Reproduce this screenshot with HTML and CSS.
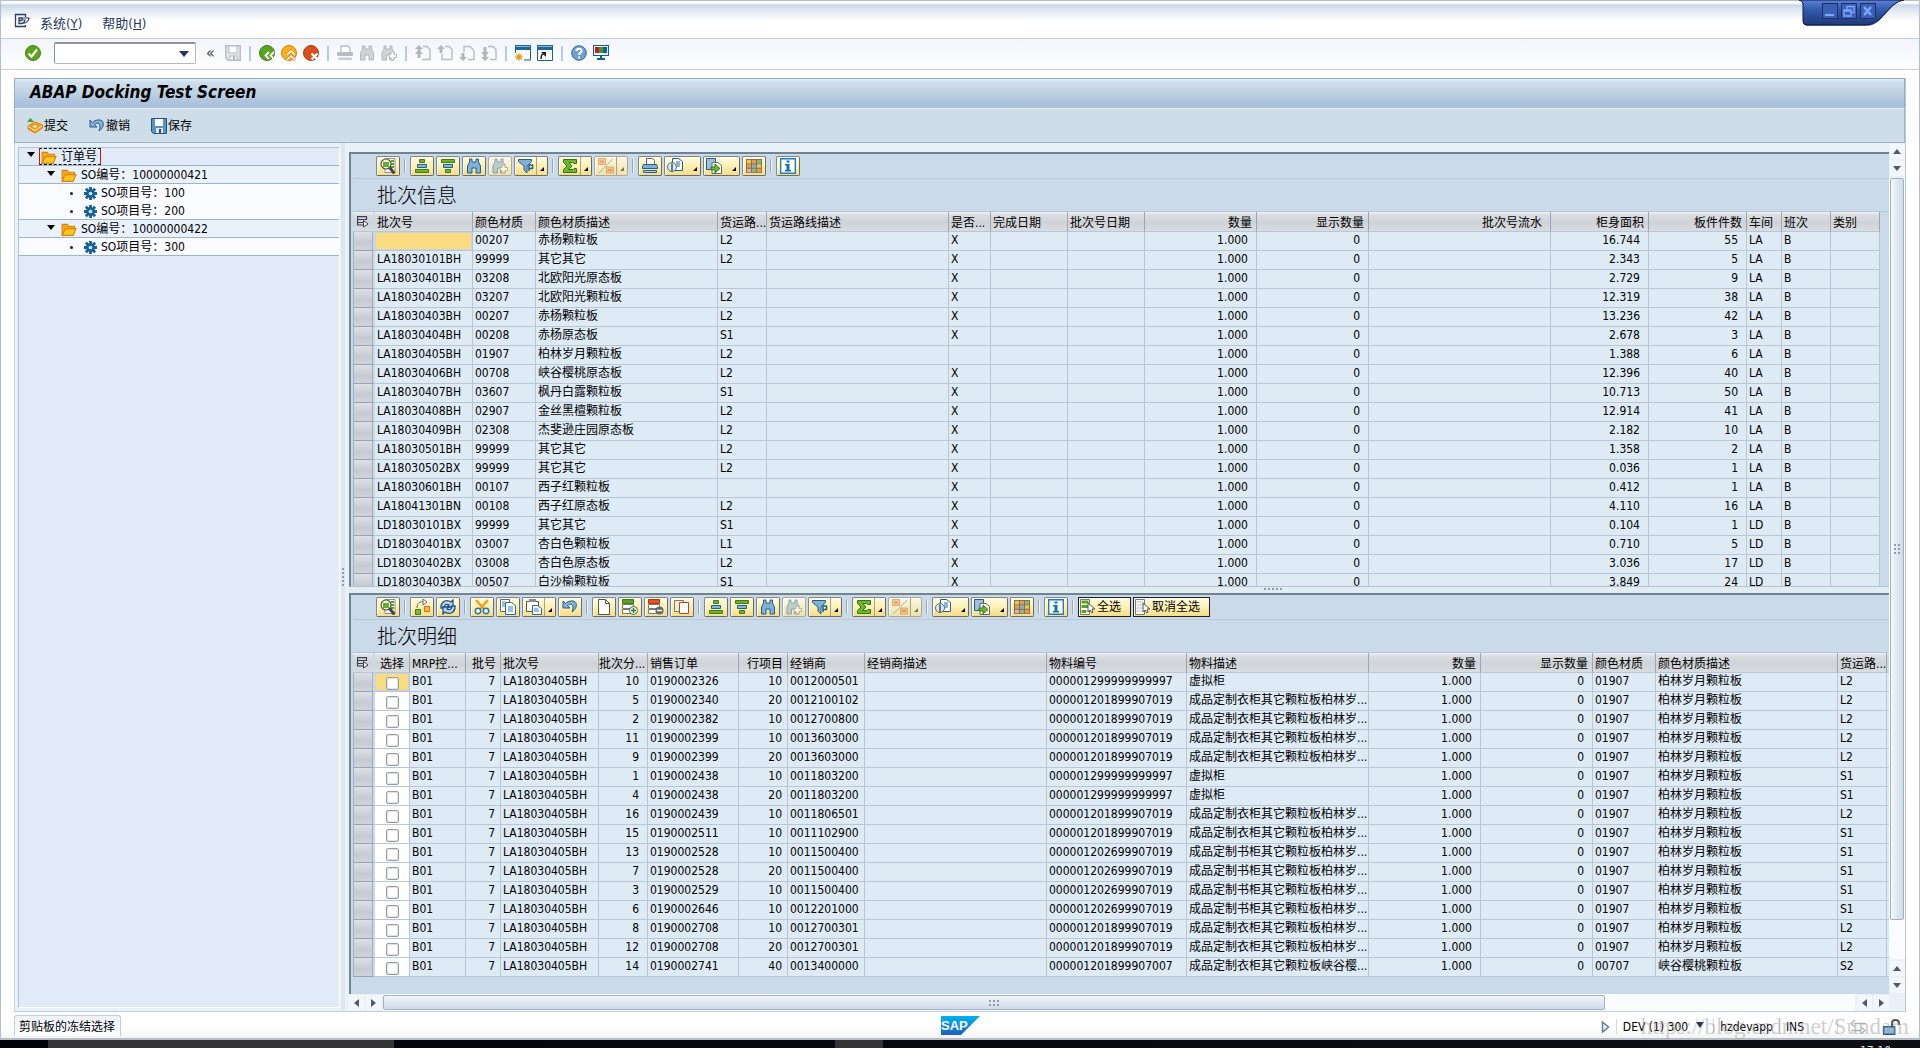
FILE: index.html
```html
<!DOCTYPE html>
<html lang="zh-CN">
<head>
    <meta charset="UTF-8">
    <meta name="viewport" content="width=device-width, initial-scale=1.0">
    <title>ABAP Docking Test Screen</title>
    <link rel="stylesheet" href="styles.css">
</head>
<body>
    <!-- icon sprite -->
    <svg class="sprite" aria-hidden="true">
        <defs>
            <linearGradient id="g-sap" x1="0" y1="0" x2="0" y2="1">
                <stop offset="0" stop-color="#00b4ee"/><stop offset="1" stop-color="#1c5fbf"/>
            </linearGradient>
            <linearGradient id="g-win" x1="0" y1="0" x2="0" y2="1">
                <stop offset="0" stop-color="#5b82d6"/><stop offset="0.4" stop-color="#3458ac"/><stop offset="1" stop-color="#1f3a7c"/>
            </linearGradient>
        </defs>
        <symbol id="i-menu" viewBox="0 0 16 16"><path d="M11.500 4V1.500h-10v12h10V12M8 5H5v5.500h3M5 7.500h3" fill="none" stroke="#2b3c66" stroke-width="1.300"/><path d="M8 5h7c0 3-3 5.500-7 5.500 2-1 3-2 3-3.500H8z" fill="#fff" stroke="#2b3c66" stroke-width="1.200"/></symbol>
        <symbol id="i-ok" viewBox="0 0 16 16"><circle cx="8" cy="8" r="7.500" fill="#5aa514" stroke="#4b7d2a"/><path d="M3.500 8.500l3 3 5.500-7" fill="none" stroke="#fff" stroke-width="2.200"/></symbol>
        <symbol id="i-save-off" viewBox="0 0 16 16"><path d="M.7.7h14.600v14.600H3L.7 13z" fill="#dfe1e3" stroke="#b9bcc1" stroke-width="1.400"/><path d="M4 1h8v7H4z" fill="#fff" stroke="#b9bcc1"/><path d="M5 11h7v4H5z" fill="#fff" stroke="#b9bcc1"/><path d="M8 11h2v4H8z" fill="#b0b4b9"/></symbol>
        <symbol id="i-back" viewBox="0 0 16 16"><circle cx="8" cy="8" r="7.500" fill="#57a51c" stroke="#3d7a28"/><path d="M10 7L6.500 10.500 10 14M15 7l-3.500 3.500L15 14" fill="none" stroke="#fff" stroke-width="1.800"/></symbol>
        <symbol id="i-exit" viewBox="0 0 16 16"><circle cx="8" cy="8" r="7.500" fill="#f9b115" stroke="#e07a10"/><path d="M6 10l4-4 4 4M6 15l4-4 4 4" fill="none" stroke="#e07a10" stroke-width="3"/><path d="M6 10l4-4 4 4M6 15l4-4 4 4" fill="none" stroke="#fff" stroke-width="1.700"/></symbol>
        <symbol id="i-cancel" viewBox="0 0 16 16"><circle cx="8" cy="8" r="7.500" fill="#d9501a" stroke="#b23c10"/><path d="M8.500 8.500l6 6M14.500 8.500l-6 6" stroke="#fff" stroke-width="2.400"/></symbol>
        <symbol id="i-print-off" viewBox="0 0 16 16"><path d="M4 7V1h7l2 2v4" fill="#fff" stroke="#b9bcc1" stroke-width="1.300"/><rect x="0" y="7" width="16" height="4" rx="1" fill="#b9bcc1"/><rect x="1" y="12.500" width="14" height="2.500" rx="1" fill="#c9ccd0"/></symbol>
        <symbol id="i-find-off" viewBox="0 0 16 16"><path d="M3.500 1h2.500v3h4V1h2.500v3l2 4v7H10v-5H6v5H1.500V8l2-4z" fill="#d0d3d6" stroke="#b3b6bb"/></symbol>
        <symbol id="i-next-off" viewBox="0 0 16 16"><path d="M3 1h2v3h4V1h2v3l2 3v8H8.500v-5h-3v5H1V8l2-4z" fill="#d0d3d6" stroke="#b3b6bb"/><path d="M10 7h3v2.500h2.500v3H13V15h-3v-2.500H8v-3h2z" fill="#fff" stroke="#b3b6bb"/></symbol>
        <symbol id="i-first" viewBox="0 0 16 16"><path d="M8 1.500h4l3 3v10H7" fill="none" stroke="#b9bcc1" stroke-width="1.400"/><path d="M4 0l4 4H5.500v2L8 9H5.500v4h-3V9H0l2.500-3V4H0z" fill="#b3b6bb"/></symbol>
        <symbol id="i-prev" viewBox="0 0 16 16"><path d="M8 1.500h4l3 3v10H5V9" fill="none" stroke="#b9bcc1" stroke-width="1.400"/><path d="M4 0l4 4H5.500v4h-3V4H0z" fill="#b3b6bb"/></symbol>
        <symbol id="i-nextp" viewBox="0 0 16 16"><path d="M5 7V1.500h6l4 4v9H9" fill="none" stroke="#b9bcc1" stroke-width="1.400"/><path d="M4 16l4-4H5.500V8h-3v4H0z" fill="#b3b6bb"/></symbol>
        <symbol id="i-last" viewBox="0 0 16 16"><path d="M7 1.500h5l3 3v10H9" fill="none" stroke="#b9bcc1" stroke-width="1.400"/><path d="M4 16l4-4H5.500v-2L8 7H5.500V2h-3v5H0l2.500 3v2H0z" fill="#b3b6bb"/></symbol>
        <symbol id="i-newwin" viewBox="0 0 16 16"><path d="M.5 8V1h15v14H9" fill="#fff" stroke="#14618f"/><path d="M0 0h16v5H0z" fill="#1a699b"/><path d="M1 1h14v1H1z" fill="#8db9d6"/><circle cx="4" cy="12" r="2.500" fill="#fbb614"/><path d="M4 8v8M0 12h8M1 9l6 6M7 9l-6 6" stroke="#f0960e"/></symbol>
        <symbol id="i-shortcut" viewBox="0 0 16 16"><path d="M.5.5h15v15H.5z" fill="#fff" stroke="#14618f"/><path d="M0 0h16v5H0z" fill="#1a699b"/><path d="M1 1h14v1H1z" fill="#8db9d6"/><path d="M4 14c0-4 1-5 4-6" fill="none" stroke="#222" stroke-width="1.500"/><path d="M4 7h5v5z" fill="#222"/></symbol>
        <symbol id="i-help" viewBox="0 0 16 16"><circle cx="8" cy="8" r="7.300" fill="#6fa0cf" stroke="#2f6ca5"/><path d="M5.500 6c0-3 5-3 5 0 0 2-2.500 1.800-2.500 4M8 11.500v2" fill="none" stroke="#fff" stroke-width="2"/></symbol>
        <symbol id="i-layout" viewBox="0 0 16 16"><path d="M0 0h16v11H0z" fill="#105f95"/><path d="M1 1h14v9H1z" fill="#e8f2fa"/><path d="M2 2h4v6H2z" fill="#d01818"/><path d="M6 2h4v6H6z" fill="#38a01c"/><path d="M10 2h4v6h-4z" fill="#1657a8"/><path d="M7 11h2v2h3v2H4v-2h3z" fill="#105f95"/></symbol>
        <symbol id="i-submit" viewBox="0 0 16 16"><path d="M1 8l7-4 7.500 3v3L8 15l-7-4z" fill="#f6a71c" stroke="#d9780c"/><path d="M4 8.500l4-2 4 1.500-4 2.500z" fill="#fff3d0" stroke="#e08a14"/><path d="M1 8.500l7 4 7-5" fill="none" stroke="#fbe0a0"/><path d="M3.500 0L7 4H0z" fill="#4f9a28"/></symbol>
        <symbol id="i-undo" viewBox="0 0 16 16"><path d="M1 2v7h7L5.500 6.500C9 3.500 13 6 10 13c6-4 6-12-1-11-2 0-4 1-5.500 2.500z" fill="#82b1d8" stroke="#1f5f94"/></symbol>
        <symbol id="i-save" viewBox="0 0 16 16"><path d="M.5.5h15v15H2.500l-2-2z" fill="#5b93bf" stroke="#14588a"/><path d="M4 1h8v7H4z" fill="#fff"/><path d="M5 10h7v5H5z" fill="#dbe8f2"/><path d="M8 11h2v4H8z" fill="#14588a"/></symbol>
        <symbol id="i-folder" viewBox="0 0 16 14"><path d="M.6 13V1.500H6l1.500 2H14V6" fill="#f4a81a" stroke="#d9820e" stroke-width="1.200"/><path d="M.6 13.300L4 6h11.500l-3 7.300z" fill="#fbc81e" stroke="#d9820e" stroke-width="1.200"/></symbol>
        <symbol id="i-gear" viewBox="0 0 14 14"><path d="M7 0v14M0 7h14M2 2l10 10M12 2L2 12" stroke="#12609a" stroke-width="3"/><circle cx="7" cy="7" r="4.600" fill="#12609a"/><circle cx="7" cy="7" r="2" fill="#cfe3f2"/></symbol>
        <symbol id="i-detail" viewBox="0 0 16 16"><path d="M5 .5h10v14H5z" fill="#fff" stroke="#8a8f94"/><path d="M11 2h3v2h-3zM11 5h3v2h-3zM11 8h3v2h-3z" fill="#5aa514"/><circle cx="6" cy="6" r="5" fill="#eef6e4" stroke="#555" stroke-width="1.200"/><path d="M3 4h6v5H3z" fill="#67ac2a"/><path d="M9.500 9.500l5 6" stroke="#444" stroke-width="3"/></symbol>
        <symbol id="i-asc" viewBox="0 0 16 16"><path d="M5.500 1.500h5v3h-5z" fill="#6cb52c" stroke="#3c7c1c"/><path d="M3.500 6.500h9v3h-9z" fill="#8ab6d8" stroke="#1e5f8f"/><path d="M1.500 11.500h13v3h-13z" fill="#6cb52c" stroke="#3c7c1c"/></symbol>
        <symbol id="i-desc" viewBox="0 0 16 16"><path d="M1.500 1.500h13v3h-13z" fill="#6cb52c" stroke="#3c7c1c"/><path d="M3.500 6.500h9v3h-9z" fill="#8ab6d8" stroke="#1e5f8f"/><path d="M5.500 11.500h5v3h-5z" fill="#6cb52c" stroke="#3c7c1c"/></symbol>
        <symbol id="i-find" viewBox="0 0 16 16"><path d="M3.500 1h2.500v3h4V1h2.500v3l2 4v7H10v-5H6v5H1.500V8l2-4z" fill="#7fb0d8" stroke="#1e5f8f"/></symbol>
        <symbol id="i-findn" viewBox="0 0 16 16"><path d="M3 1h2v3h4V1h2v3l2 3v8H8.500v-5h-3v5H1V8l2-4z" fill="#7fb0d8" stroke="#1e5f8f"/><path d="M10 7h3v2.500h2.500v3H13V15h-3v-2.500H8v-3h2z" fill="#fff" stroke="#777"/></symbol>
        <symbol id="i-filter" viewBox="0 0 16 16"><path d="M.5 1.500h13v2L9 8v7l-3-3V8L.5 3.500z" fill="#82b1d8" stroke="#1e5f8f"/><path d="M11 13V7h3.500v3.500H11" fill="none" stroke="#1e5f8f" stroke-width="1.500"/></symbol>
        <symbol id="i-sum" viewBox="0 0 16 16"><path d="M1.500 1.500h13v4h-3l-1-1H7L10 8l-3.500 3.500H11l1-1h2.500v4h-13v-3L5 8 1.500 4.500z" fill="#6cb52c" stroke="#2c7a1c"/></symbol>
        <symbol id="i-sub" viewBox="0 0 16 16"><path d="M.5.5h7v6h-7zM8.500 9h7v6h-7z" fill="#f5a04c" stroke="#d0661c"/><path d="M2 2.500h4v2H2zM10 11h4v2h-4z" fill="#d0502c"/><path d="M15 1L1 15" stroke="#777"/></symbol>
        <symbol id="i-print" viewBox="0 0 16 16"><path d="M4.500 6V.5h6l2 2V6" fill="#fff" stroke="#666"/><path d="M1.500 6.500h13l1 2v2H.5v-2z" fill="#7fb0d8" stroke="#1e5f8f"/><path d="M1.500 12.500h13v2h-13z" fill="#b9d4ea" stroke="#1e5f8f"/></symbol>
        <symbol id="i-view" viewBox="0 0 16 16"><path d="M5.500.5h6l4 3v9h-10z" fill="#fff" stroke="#1e5f8f"/><path d="M9 4h4M9 6h4M9 8h4" stroke="#1e6fa8"/><circle cx="5" cy="9" r="4.500" fill="#dce9f2" stroke="#666"/><path d="M5 5.500V13" stroke="#1e5f8f" stroke-width="1.500"/></symbol>
        <symbol id="i-export" viewBox="0 0 16 16"><path d="M.5.5h9v11h-9z" fill="#9cc0de" stroke="#1e5f8f"/><path d="M6 4.500h6l3.500 3v8H6z" fill="#fff" stroke="#666"/><path d="M5 9h4V6l5 4.500L9 15v-3H5z" fill="#6cb52c" stroke="#2c7a1c"/></symbol>
        <symbol id="i-grid" viewBox="0 0 16 16"><path d="M0 1h16v14H0z" fill="#77736a"/><path d="M1 2h4v3.500H1zM11 6.300h4v3.500h-4z" fill="#f8c832"/><path d="M6 2h4v3.500H6zM1 6.300h4v3.500H1zM11 10.800h4v3.500h-4z" fill="#f09a3e"/><path d="M11 2h4v3.500h-4zM6 10.800h4v3.500H6z" fill="#92b968"/><path d="M6 6.300h4v3.500H6z" fill="#86aed2"/><path d="M1 10.800h4v3.500H1z" fill="#f0a8a8"/></symbol>
        <symbol id="i-info" viewBox="0 0 16 16"><path d="M.7.7h14.600v14.600H.7z" fill="#fff" stroke="#1a7fc0" stroke-width="1.400"/><path d="M6.500 2.500h3v2h-3zM5 6h4.500v6H11v1.500H5V12h1.500V7.500H5z" fill="#1272b0"/></symbol>
        <symbol id="i-mass" viewBox="0 0 16 16"><path d="M1.500 10.500h5v5h-5z" fill="#7cbc3c" stroke="#3c7c1c"/><path d="M10.500 7.500h5v5h-5z" fill="#f9b846" stroke="#e06a10"/><path d="M3 9c0-5 3-7 7-6" fill="none" stroke="#666"/><path d="M9 0l4 3-4 3z" fill="#fff" stroke="#666"/></symbol>
        <symbol id="i-refresh" viewBox="0 0 16 16"><path d="M1 9V7c1-5 6-7 10-4l2-2v7H7l2-2C6.500 4.500 4 6 4 9z" fill="#bcd4ec" stroke="#1c4f8c" stroke-width="1.300"/><path d="M15 7v2c-1 5-6 7-10 4l-2 2V8h6l-2 2c2.500 1.500 5 0 5-3z" fill="#bcd4ec" stroke="#1c4f8c" stroke-width="1.300"/></symbol>
        <symbol id="i-cut" viewBox="0 0 16 16"><path d="M2 1l8 9M14 1L6 10" stroke="#f0a01e" stroke-width="2.500"/><circle cx="4" cy="12" r="2.700" fill="#fff" stroke="#2b74ad" stroke-width="1.500"/><circle cx="12" cy="12" r="2.700" fill="#fff" stroke="#2b74ad" stroke-width="1.500"/></symbol>
        <symbol id="i-copy" viewBox="0 0 16 16"><path d="M.5.500h9v12h-9z" fill="#fff" stroke="#666"/><path d="M2 3h3M2 5h3M2 7h3" stroke="#3a82b8"/><path d="M5.500 3.500h6l4 3v9h-10z" fill="#fff" stroke="#1e6fa8"/><path d="M8 8h5M8 10h5M8 12h5" stroke="#3a82b8"/></symbol>
        <symbol id="i-paste" viewBox="0 0 16 16"><path d="M.5 2.500h12v10H.5z" fill="#fff" stroke="#555"/><path d="M3 0h7v3H3z" fill="#8a8a86"/><path d="M6.500 6.500h5l4 3v6h-9z" fill="#fff" stroke="#1e6fa8"/><path d="M8 10h4M8 12h5" stroke="#3a82b8"/></symbol>
        <symbol id="i-new" viewBox="0 0 16 16"><path d="M2.500.5h7l4 4v11h-11z" fill="#fff" stroke="#555"/><path d="M9.500.5v4h4" fill="none" stroke="#555"/></symbol>
        <symbol id="i-insrow" viewBox="0 0 16 16"><path d="M.5.500h11v4H.5z" fill="#55a516" stroke="#3c7c1c"/><path d="M.5 5.500h11v4H.5zM.5 10.500h11v4H.5z" fill="#fff" stroke="#777"/><circle cx="11.500" cy="11.500" r="4" fill="#fff" stroke="#2c7a3c"/><path d="M11.500 9v5M9 11.500h5" stroke="#2c7a3c" stroke-width="1.500"/></symbol>
        <symbol id="i-delrow" viewBox="0 0 16 16"><path d="M.5.500h11v4H.5z" fill="#e0531a" stroke="#b23c10"/><path d="M.5 5.500h11v4H.5zM.5 10.500h11v4H.5z" fill="#fff" stroke="#777"/><circle cx="11.500" cy="11.500" r="4" fill="#666"/><path d="M9 11.500h5" stroke="#fff" stroke-width="1.500"/></symbol>
        <symbol id="i-duprow" viewBox="0 0 16 16"><path d="M.5 1.500h9v11h-9z" fill="#f7efc8" stroke="#777"/><path d="M5.500 3.500h9v11h-9z" fill="#fff" stroke="#c8402c"/></symbol>
        <symbol id="i-selall" viewBox="0 0 16 16"><path d="M.5.500h9v15h-9z" fill="#fff" stroke="#777"/><path d="M1.500 1.500h7v3h-7zM1.500 6h7v3h-7zM1.500 11h5v3h-5z" fill="#55a516"/><path d="M8 4v9l2-2 2 3 1-1-1-3h3z" fill="#fff" stroke="#555"/></symbol>
        <symbol id="i-selnone" viewBox="0 0 16 16"><path d="M.5.500h9v15h-9z" fill="#fff" stroke="#777"/><path d="M1.500 3h7M1.500 6h7M1.500 9h7M1.500 12h5" stroke="#b8bcc0"/><path d="M8 4v9l2-2 2 3 1-1-1-3h3z" fill="#fff" stroke="#555"/></symbol>
        <symbol id="i-selcol" viewBox="0 0 12 12"><path d="M9.500 4V.7h-9V9H7M.5 3.500h9M.5 6.500H6" fill="none" stroke="#3b3f55" stroke-width="1.200"/><path d="M6.500 4.500v6.500l4.500-3z" fill="#fff" stroke="#3b3f55"/></symbol>
        <symbol id="i-lock" viewBox="0 0 18 16"><path d="M9 8V4c0-4 7-4 7 0v2" fill="none" stroke="#555" stroke-width="2"/><path d="M.7 7.700h11v7.500H.7z" fill="#8fbbdf" stroke="#1a5c8e" stroke-width="1.400"/></symbol>
        <symbol id="i-xfer" viewBox="0 0 16 14"><path d="M5 3.500h10M11 10.500H1M5 0L1 3.500 5 7M11 7l4 3.500L11 14" fill="none" stroke="#b3b6ba" stroke-width="1.500"/></symbol>
    </svg>

    <div class="window">
        <div class="menubar">
            <svg class="icon"><use href="#i-menu"/></svg>
            <button class="menu-item">系统(<u>Y</u>)</button>
            <button class="menu-item">帮助(<u>H</u>)</button>
        </div>

        <div class="window-controls">
            <svg class="controls-bg" viewBox="0 0 106 30"><path d="M0 0q4 1 4 5v16q0 5 5 5h58q8 0 14-6L93 7q7-7 13-7z" fill="#10204a" opacity="0.500"/><path d="M0 0q4 1 4 4v17q0 4 4 4h59q7 0 13-5L93 6q7-6 12-6z" fill="url(#g-win)" stroke="#0c1a40" stroke-width="1"/></svg>
            <button aria-label="最小化"><svg viewBox="0 0 14 14"><path d="M2 11h9" stroke="#7fa6ff" stroke-width="2"/></svg></button>
            <button aria-label="还原"><svg viewBox="0 0 14 14"><path d="M5 5V2.500h7v6H9.500M2 6h7v6H2zM2 7h7" fill="none" stroke="#7fa6ff" stroke-width="1.300"/></svg></button>
            <button aria-label="关闭"><svg viewBox="0 0 14 14"><path d="M3 3l7 8M10 3l-7 8" stroke="#7fa6ff" stroke-width="2.500"/></svg></button>
        </div>

        <div class="toolbar">
            <button class="tool"><svg class="icon"><use href="#i-ok"/></svg></button>
            <div class="command">
                <input type="text" aria-label="命令">
                <button class="command-arrow" aria-label="历史"></button>
            </div>
            <button class="collapse">«</button>
            <button class="tool"><svg class="icon"><use href="#i-save-off"/></svg></button>
            <span class="sep"></span>
            <button class="tool"><svg class="icon"><use href="#i-back"/></svg></button>
            <button class="tool"><svg class="icon"><use href="#i-exit"/></svg></button>
            <button class="tool"><svg class="icon"><use href="#i-cancel"/></svg></button>
            <span class="sep"></span>
            <button class="tool"><svg class="icon"><use href="#i-print-off"/></svg></button>
            <button class="tool"><svg class="icon"><use href="#i-find-off"/></svg></button>
            <button class="tool"><svg class="icon"><use href="#i-next-off"/></svg></button>
            <span class="sep"></span>
            <button class="tool"><svg class="icon"><use href="#i-first"/></svg></button>
            <button class="tool"><svg class="icon"><use href="#i-prev"/></svg></button>
            <button class="tool"><svg class="icon"><use href="#i-nextp"/></svg></button>
            <button class="tool"><svg class="icon"><use href="#i-last"/></svg></button>
            <span class="sep"></span>
            <button class="tool"><svg class="icon"><use href="#i-newwin"/></svg></button>
            <button class="tool"><svg class="icon"><use href="#i-shortcut"/></svg></button>
            <span class="sep"></span>
            <button class="tool"><svg class="icon"><use href="#i-help"/></svg></button>
            <button class="tool"><svg class="icon"><use href="#i-layout"/></svg></button>
        </div>

        <div class="frame">
            <h1 class="titlebar">ABAP Docking Test Screen</h1>
            <div class="app-toolbar">
                <button><svg class="icon"><use href="#i-submit"/></svg>提交</button>
                <button><svg class="icon"><use href="#i-undo"/></svg>撤销</button>
                <button><svg class="icon"><use href="#i-save"/></svg>保存</button>
            </div>

            <div class="content">
                <div class="tree-pane">
                    <ul class="tree">
                        <li class="node root"><span class="arrow"></span><span class="focus"><svg class="folder"><use href="#i-folder"/></svg>订单号</span></li>
                        <li class="node parent"><span class="arrow"></span><svg class="folder"><use href="#i-folder"/></svg>SO编号：10000000421</li>
                        <li class="node leaf"><span class="dot"></span><svg class="gear"><use href="#i-gear"/></svg>SO项目号：100</li>
                        <li class="node leaf last"><span class="dot"></span><svg class="gear"><use href="#i-gear"/></svg>SO项目号：200</li>
                        <li class="node parent"><span class="arrow"></span><svg class="folder"><use href="#i-folder"/></svg>SO编号：10000000422</li>
                        <li class="node leaf last"><span class="dot"></span><svg class="gear"><use href="#i-gear"/></svg>SO项目号：300</li>
                    </ul>
                </div>
                <div class="splitter"><span class="grip"></span></div>

                <div class="docking">
                    <div class="panel panel-top">
                        <div class="alv-toolbar" id="headToolbar"></div>
                        <h2 class="alv-title">批次信息</h2>
                        <table class="alv" id="headTable"></table>
                    </div>
                    <div class="h-splitter"><span class="grip"></span></div>
                    <div class="panel panel-bottom">
                        <div class="alv-toolbar" id="itemToolbar"></div>
                        <h2 class="alv-title">批次明细</h2>
                        <table class="alv" id="itemTable"></table>
                    </div>
                    <div class="hscroll">
                        <button class="sb left" aria-label="左"></button>
                        <button class="sb right" aria-label="右"></button>
                        <div class="htrack"><div class="hthumb"><span class="grip"></span></div></div>
                        <button class="sb left" aria-label="左"></button>
                        <button class="sb right" aria-label="右"></button>
                    </div>
                </div>

                <div class="vscroll">
                    <button class="sb up" aria-label="上"></button>
                    <button class="sb down" aria-label="下"></button>
                    <div class="vtrack"><div class="vthumb"><span class="grip"></span></div></div>
                    <button class="sb up" aria-label="上"></button>
                    <button class="sb down" aria-label="下"></button>
                </div>
            </div>
        </div>

        <div class="statusbar">
            <span class="message">剪贴板的冻结选择</span>
            <svg class="logo" viewBox="0 0 39 19"><path d="M0 0h39L20 19H0z" fill="url(#g-sap)"/><text x="0" y="14" class="logo-text">SAP</text></svg>
            <div class="session">
                <svg class="play" viewBox="0 0 8 12"><path d="M1 1l6 5-6 5z" fill="#eaf1f8" stroke="#5f7da3" stroke-width="1.500"/></svg>
                <span class="status-sep"></span>
                <span class="system">DEV (1) 300<i class="caret"></i></span>
                <span class="status-sep"></span>
                <span class="host">hzdevapp</span>
                <span class="status-sep"></span>
                <span class="mode">INS</span>
                <span class="status-sep"></span>
                <svg class="xfer"><use href="#i-xfer"/></svg>
                <svg class="lock"><use href="#i-lock"/></svg>
            </div>
            <span class="watermark">https://blog.csdn.net/Sundam</span>
        </div>
    </div>
    <div class="taskbar"><span class="task wide"></span><span class="task small"></span><span class="clock">17:10</span></div>

    <script>
        const headTools = ["detail", "|", "asc", "desc", "find", "findn off", "filter split", "|", "sum split", "sub split off",
            "|", "print", "view drop", "export drop", "grid", "|", "info"];
        const itemTools = ["detail", "|", "mass", "refresh", "|", "cut", "copy", "paste split", "undo", "|", "new", "insrow", "delrow", "duprow",
            "|", "asc", "desc", "find", "findn off", "filter split", "|", "sum split", "sub split off",
            "|", "view drop", "export drop", "grid", "|", "info", "|", "selall text 全选", "selnone text 取消全选"];

        // [title, width, alignment]
        const headCols = [["批次号", 98], ["颜色材质", 63], ["颜色材质描述", 182], ["货运路...", 49], ["货运路线描述", 182], ["是否...", 42],
            ["完成日期", 77], ["批次号日期", 77], ["数量", 112, "num"], ["显示数量", 112, "num"], ["批次号流水", 182, "num wide"],
            ["柜身面积", 98, "num"], ["板件件数", 98, "num"], ["车间", 35], ["班次", 49], ["类别", 49]];
        const itemCols = [["选择", 35, "check"], ["MRP控...", 56], ["批号", 35, "int"], ["批次号", 98], ["批次分...", 49, "num"], ["销售订单", 91],
            ["行项目", 49, "int"], ["经销商", 77], ["经销商描述", 182], ["物料编号", 140], ["物料描述", 182], ["数量", 112, "num"],
            ["显示数量", 112, "num"], ["颜色材质", 63], ["颜色材质描述", 182], ["货运路...", 49], ["", 49]];

        const batches = [
            ["", "00207", "赤杨颗粒板", "L2", "X", "16.744", 55, "LA"],
            ["LA18030101BH", "99999", "其它其它", "L2", "X", "2.343", 5, "LA"],
            ["LA18030401BH", "03208", "北欧阳光原态板", "", "X", "2.729", 9, "LA"],
            ["LA18030402BH", "03207", "北欧阳光颗粒板", "L2", "X", "12.319", 38, "LA"],
            ["LA18030403BH", "00207", "赤杨颗粒板", "L2", "X", "13.236", 42, "LA"],
            ["LA18030404BH", "00208", "赤杨原态板", "S1", "X", "2.678", 3, "LA"],
            ["LA18030405BH", "01907", "柏林岁月颗粒板", "L2", "", "1.388", 6, "LA"],
            ["LA18030406BH", "00708", "峡谷樱桃原态板", "L2", "X", "12.396", 40, "LA"],
            ["LA18030407BH", "03607", "枫丹白露颗粒板", "S1", "X", "10.713", 50, "LA"],
            ["LA18030408BH", "02907", "金丝黑檀颗粒板", "L2", "X", "12.914", 41, "LA"],
            ["LA18030409BH", "02308", "杰斐逊庄园原态板", "L2", "X", "2.182", 10, "LA"],
            ["LA18030501BH", "99999", "其它其它", "L2", "X", "1.358", 2, "LA"],
            ["LA18030502BX", "99999", "其它其它", "L2", "X", "0.036", 1, "LA"],
            ["LA18030601BH", "00107", "西子红颗粒板", "", "X", "0.412", 1, "LA"],
            ["LA18041301BN", "00108", "西子红原态板", "L2", "X", "4.110", 16, "LA"],
            ["LD18030101BX", "99999", "其它其它", "S1", "X", "0.104", 1, "LD"],
            ["LD18030401BX", "03007", "杏白色颗粒板", "L1", "X", "0.710", 5, "LD"],
            ["LD18030402BX", "03008", "杏白色原态板", "L2", "X", "3.036", 17, "LD"],
            ["LD18030403BX", "00507", "白沙榆颗粒板", "S1", "X", "3.849", 24, "LD"]
        ];

        const virtual = "虚拟柜";
        const wardrobe = "成品定制衣柜其它颗粒板柏林岁...";
        const bookcase = "成品定制书柜其它颗粒板柏林岁...";
        const items = [
            [10, "0190002326", 10, "0012000501", "000001299999999997", virtual, "L2"],
            [5, "0190002340", 20, "0012100102", "000001201899907019", wardrobe, "L2"],
            [2, "0190002382", 10, "0012700800", "000001201899907019", wardrobe, "L2"],
            [11, "0190002399", 10, "0013603000", "000001201899907019", wardrobe, "L2"],
            [9, "0190002399", 20, "0013603000", "000001201899907019", wardrobe, "L2"],
            [1, "0190002438", 10, "0011803200", "000001299999999997", virtual, "S1"],
            [4, "0190002438", 20, "0011803200", "000001299999999997", virtual, "S1"],
            [16, "0190002439", 10, "0011806501", "000001201899907019", wardrobe, "L2"],
            [15, "0190002511", 10, "0011102900", "000001201899907019", wardrobe, "S1"],
            [13, "0190002528", 10, "0011500400", "000001202699907019", bookcase, "S1"],
            [7, "0190002528", 20, "0011500400", "000001202699907019", bookcase, "S1"],
            [3, "0190002529", 10, "0011500400", "000001202699907019", bookcase, "S1"],
            [6, "0190002646", 10, "0012201000", "000001202699907019", bookcase, "S1"],
            [8, "0190002708", 10, "0012700301", "000001201899907019", wardrobe, "L2"],
            [12, "0190002708", 20, "0012700301", "000001201899907019", wardrobe, "L2"],
            [14, "0190002741", 40, "0013400000", "000001201899907007", "成品定制衣柜其它颗粒板峡谷樱...", "S2"]
        ];

        function buildToolbar(id, tools) {
            document.getElementById(id).innerHTML = tools.map(tool => {
                if (tool === "|") return '<span class="alv-sep"></span>';
                const [name, ...rest] = tool.split(" ");
                const isText = rest[0] === "text";
                const label = isText ? rest[1] : "";
                const cls = isText ? "text" : rest.join(" ");
                return `<button class="alv-btn ${cls}"><svg class="icon"><use href="#i-${name}"/></svg>${label}</button>`;
            }).join("");
        }

        function buildTable(id, cols, rows) {
            const width = cols.reduce((sum, col) => sum + col[1], 22);
            const table = document.getElementById(id);
            table.style.width = width + "px";
            let html = '<colgroup><col style="width:22px">' + cols.map(c => `<col style="width:${c[1]}px">`).join("") + "</colgroup>";
            html += '<thead><tr><th class="sel"><svg class="selcol"><use href="#i-selcol"/></svg></th>';
            html += cols.map(c => `<th class="${c[2] || ""}">${c[0]}</th>`).join("") + "</tr></thead><tbody>";
            rows.forEach((row, r) => {
                html += '<tr><td class="sel"></td>' + row.map((value, i) => {
                    const cls = (cols[i][2] || "") + (r === 0 && i === 0 ? " current" : "");
                    return `<td class="${cls}">${value}</td>`;
                }).join("") + "</tr>";
            });
            table.innerHTML = html + "</tbody>";
        }

        buildToolbar("headToolbar", headTools);
        buildToolbar("itemToolbar", itemTools);
        buildTable("headTable", headCols, batches.map(b =>
            [b[0], b[1], b[2], b[3], "", b[4], "", "", "1.000", 0, "", b[5], b[6], b[7], "B", ""]));
        buildTable("itemTable", itemCols, items.map((d, i) => {
            const cherry = i === items.length - 1;
            return [`<input type="checkbox" aria-label="选择 ${d[0]}">`, "B01", 7, "LA18030405BH", d[0], d[1], d[2], d[3], "", d[4], d[5],
                "1.000", 0, cherry ? "00707" : "01907", cherry ? "峡谷樱桃颗粒板" : "柏林岁月颗粒板", d[6], ""];
        }));
    </script>
</body>
</html>
```
FILE: styles.css
```css
* {
    box-sizing: border-box;
}
body {
    margin: 0;
    height: 100vh;
    display: flex;
    flex-direction: column;
    overflow: hidden;
    background: #05070b;
    color: #000;
    font-family: "DejaVu Sans Condensed", "Noto Sans CJK SC", sans-serif;
    font-size: 12px;
    line-height: 18px;
}
button {
    margin: 0;
    padding: 0;
    border: 0;
    background: none;
    color: inherit;
    font: inherit;
    white-space: nowrap;
}
.sprite {
    position: absolute;
    width: 0;
    height: 0;
}
.icon {
    width: 16px;
    height: 16px;
    flex: none;
    display: block;
}

/* window */
.window {
    position: relative;
    flex: 1;
    min-height: 0;
    display: flex;
    flex-direction: column;
    background: #fff;
    border: 1px solid #b3bfd0;
    border-bottom: 2px solid #b8bcc2;
}
.menubar {
    height: 38px;
    display: flex;
    align-items: center;
    padding: 8px 13px 0;
    border-bottom: 1px solid #c3ccd9;
    background: linear-gradient(#fff 0, #fff 2px, #cbd8e8 4px, #e4eaf2 10px, #fff 20px);
    color: #23345c;
    font-size: 13px;
}
.menubar .icon {
    margin-right: 10px;
    margin-bottom: 6px;
}
.menu-item {
    margin-right: 20px;
}
.window-controls {
    position: absolute;
    top: -1px;
    right: 14px;
    width: 106px;
    height: 30px;
    display: flex;
    gap: 3px;
    padding: 3px 0 0 23px;
}
.controls-bg {
    position: absolute;
    left: 0;
    top: 0;
    width: 106px;
    height: 30px;
}
.window-controls button {
    position: relative;
    width: 16px;
    height: 16px;
    border: 1px solid #1b2f66;
    background: #3c60b4;
}
.window-controls button svg {
    display: block;
    width: 14px;
    height: 14px;
}
.toolbar {
    height: 31px;
    display: flex;
    align-items: center;
    gap: 6px;
    padding: 0 24px 2px;
    border-bottom: 1px solid #c9cdd6;
    background: linear-gradient(#f1f4f9, #fff);
}
.command {
    display: flex;
    align-items: center;
    width: 142px;
    height: 22px;
    margin: 0 4px 0 7px;
    border: 1px solid #b5b9be;
    border-top: 2px solid #8f9398;
    border-left-color: #8f9398;
    border-radius: 2px;
    background: #fff;
}
.command input {
    flex: 1;
    min-width: 0;
    border: 0;
    padding: 0 4px;
    background: none;
    font: inherit;
}
.command-arrow {
    width: 22px;
    height: 18px;
}
.command-arrow::before {
    content: "";
    display: block;
    margin: 0 auto;
    width: 0;
    border: 5px solid transparent;
    border-top: 6px solid #24365e;
    border-bottom: 0;
}
.collapse {
    width: 13px;
    font-size: 16px;
    text-align: left;
    color: #444;
}
.sep {
    width: 6px;
    height: 15px;
    border-left: 2px solid transparent;
    border-right: 2px solid transparent;
    background: #b5cde4;
    background-clip: padding-box;
}

/* screen frame */
.frame {
    flex: 1;
    min-height: 0;
    margin: 8px 13px 0;
    display: flex;
    flex-direction: column;
    border-right: 1px solid #b9c6d6;
    border-bottom: 1px solid #c5cfdb;
    background: #e8f0f8;
}
.titlebar {
    height: 31px;
    margin: 0;
    padding: 0 15px;
    border: 1px solid #93a9c4;
    border-bottom: 1px solid #e6f0f8;
    background: linear-gradient(#e2edf6 0, #cfdfec 3px, #bfd2e2 14px, #aec5dd 22px, #aac0dc);
    font-size: 17px;
    line-height: 27px;
    font-style: italic;
    font-weight: bold;
}
.app-toolbar {
    height: 34px;
    display: flex;
    align-items: center;
    gap: 21px;
    padding: 0 12px;
    border: 1px solid #9fb3c9;
    border-top: 0;
    background: #cfdde8;
}
.app-toolbar button {
    display: flex;
    align-items: center;
    gap: 1px;
}
.content {
    flex: 1;
    min-height: 0;
    display: flex;
}

/* tree */
.tree-pane {
    width: 327px;
    flex: none;
    padding: 4px 1px 3px 3px;
    border-left: 1px solid #c5d3e2;
}
.tree {
    height: 100%;
    margin: 0;
    padding: 0;
    list-style: none;
    border: 1px solid #b3c3d5;
    border-right-color: #fff;
    border-bottom-color: #fff;
    background: #e1ebf7;
}
.node {
    height: 18px;
    display: flex;
    align-items: center;
    padding-top: 1px;
    border-bottom: 1px solid #9cb4cc;
    line-height: 17px;
}
.node.root {
    padding: 0 0 0 8px;
    background: #e1ebf7;
}
.node.parent {
    padding-left: 28px;
    background: #e9f1fb;
}
.node.leaf {
    padding-left: 51px;
    background: #f9fbff;
}
.node.leaf:not(.last) {
    border-bottom-color: #f9fbff;
}
.arrow {
    border: 4px solid transparent;
    border-top: 5px solid #000;
    border-bottom: 0;
    margin: 0 6px 4px 0;
}
.root .arrow {
    margin-right: 4px;
}
.focus {
    display: flex;
    align-items: center;
    height: 17px;
    padding: 1px 3px 0 1px;
    border: 1px solid #d8101c;
    border-top: 1px dashed #000;
    border-bottom: 1px dashed #000;
}
.folder {
    width: 16px;
    height: 13px;
    margin-right: 4px;
}
.gear {
    width: 13px;
    height: 13px;
    margin-right: 4px;
}
.dot {
    width: 3px;
    height: 3px;
    margin-right: 11px;
    border-radius: 50%;
    background: #222;
}
.splitter {
    width: 8px;
    flex: none;
    display: flex;
    align-items: center;
    background: #dbe6ee;
    border-right: 4px solid #eaf1f7;
}
.grip {
    display: block;
    background-image: radial-gradient(#8e9dab 1px, transparent 1px);
    background-size: 4px 4px;
}
.splitter .grip {
    width: 4px;
    height: 20px;
}

/* docked grids */
.docking {
    flex: 1;
    min-width: 0;
    display: flex;
    flex-direction: column;
    padding-top: 9px;
}
.panel {
    min-height: 0;
    overflow: hidden;
    border-top: 2px solid #6f8595;
    border-left: 2px solid #6f8595;
    padding-left: 2px;
    background: #cbdae8;
}
.panel-top {
    flex: 435 1 0;
    border-bottom: 1px solid #b3c3d5;
}
.panel-bottom {
    flex: 401 1 0;
}
.h-splitter {
    height: 6px;
    flex: none;
    display: flex;
    justify-content: center;
    background: #e4ecf3;
}
.h-splitter .grip {
    width: 20px;
    height: 4px;
    margin-left: 308px;
}
.alv-toolbar {
    height: 25px;
    display: flex;
    align-items: center;
    gap: 2px;
    padding: 0 23px;
    border-bottom: 1px solid #b9c8d8;
}
.alv-btn {
    position: relative;
    width: 24px;
    height: 20px;
    display: flex;
    align-items: center;
    justify-content: center;
    border: 1px solid #85857c;
    border-right-color: #6c6b62;
    border-bottom-color: #6c6b62;
    border-radius: 2px;
    background: linear-gradient(#fffbe2, #fdf0b4 50%, #f5dc88);
    box-shadow: inset 1px 1px 0 #fffdf0;
}
.alv-btn.split {
    width: 34px;
    justify-content: flex-start;
    padding-left: 3px;
}
.alv-btn.drop {
    width: 37px;
    justify-content: flex-start;
    padding-left: 2px;
}
.alv-btn.split::before {
    content: "";
    position: absolute;
    right: 10px;
    top: 0;
    bottom: 0;
    border-left: 1px solid #a9a284;
}
.alv-btn.split::after,
.alv-btn.drop::after {
    content: "";
    position: absolute;
    right: 3px;
    bottom: 4px;
    border-left: 4px solid transparent;
    border-bottom: 4px solid #000;
}
.alv-btn.off {
    border-color: #aaa99b;
    background: linear-gradient(#fbf8e6, #f5edc6 50%, #efe2ad);
}
.alv-btn.off .icon,
.alv-btn.off::after {
    opacity: 0.5;
}
.alv-btn.text {
    width: auto;
    gap: 1px;
    padding: 0 9px 0 1px;
    border-color: #222;
    border-radius: 0;
}
.alv-sep {
    width: 6px;
    height: 14px;
    border-left: 2px solid transparent;
    border-right: 2px solid transparent;
    background: linear-gradient(90deg, #9aa4ae 50%, #f2f6fa 50%) padding-box;
}
.alv-title {
    height: 33px;
    margin: 0;
    padding: 0 24px;
    border-bottom: 1px solid #b3c5d8;
    font-size: 20px;
    line-height: 35px;
    font-weight: 300;
}
.alv {
    table-layout: fixed;
    border-collapse: separate;
    border-spacing: 0;
}
.alv th,
.alv td {
    height: 19px;
    padding: 0 0 0 2px;
    overflow: hidden;
    white-space: nowrap;
    text-align: left;
    vertical-align: top;
    font-weight: normal;
    line-height: 16px;
    border-right: 1px solid #b8c6d6;
    border-bottom: 1px solid #b8c6d6;
}
.alv th {
    height: 20px;
    padding-top: 3px;
    border-right-color: #98a6b5;
    background: linear-gradient(#f0f3f5 0, #dadee1 3px, #cfd3d9 55%, #d9dcdf);
}
.alv td {
    background: #deebf5;
}
.alv th.num,
.alv th.int {
    text-align: right;
    padding: 3px 4px 0 0;
}
.alv th.wide {
    padding-right: 8px;
}
.alv td.num {
    text-align: right;
    padding: 0 8px 0 0;
}
.alv td.int {
    text-align: right;
    padding: 0 5px 0 0;
}
.alv th.sel,
.alv td.sel {
    padding: 0;
    border-right: 2px solid #cbdae8;
}
.alv td.sel {
    background: linear-gradient(#dde0e5, #c6cad3 60%, #d0d3da);
    border-bottom-color: #98a3b2;
    box-shadow: inset 1px 0 0 #a5afbc, inset -1px 0 0 #a5afbc;
}
.selcol {
    display: block;
    width: 12px;
    height: 12px;
    margin: 4px 4px 0;
}
.alv th.check {
    padding-left: 5px;
}
.alv td.check {
    padding: 0;
    text-align: center;
    background: #fff;
}
.alv td.current,
.alv td.check.current {
    background: #fcdc80;
    box-shadow: inset 0 0 0 1px #c9d3e0;
}
.alv input[type="checkbox"] {
    appearance: none;
    display: block;
    width: 13px;
    height: 13px;
    margin: 4px auto 0;
    border: 1px solid #9a9da1;
    border-radius: 2px;
    background: #fff;
    box-shadow: inset 0 0 0 1px #e2e3e5;
}

/* scrollbars */
.sb {
    width: 15px;
    height: 15px;
    flex: none;
    display: flex;
    align-items: center;
    justify-content: center;
    background: #f3f6fa;
}
.sb::before {
    content: "";
    border: 4px solid transparent;
}
.sb.up::before {
    border-bottom: 5px solid #4a5c6b;
    border-top: 0;
}
.sb.down::before {
    border-top: 5px solid #4a5c6b;
    border-bottom: 0;
}
.sb.left::before {
    border-right: 5px solid #4a5c6b;
    border-left: 0;
}
.sb.right::before {
    border-left: 5px solid #4a5c6b;
    border-right: 0;
}
.vscroll {
    width: 16px;
    flex: none;
    display: flex;
    flex-direction: column;
    align-items: center;
    gap: 2px;
    padding: 1px 0 18px;
}
.vtrack {
    flex: 1;
    width: 16px;
    padding: 0 1px;
    background: #fafbfc;
}
.vthumb {
    height: 95%;
    display: flex;
    align-items: center;
    justify-content: center;
    border: 1px solid #9fb0bf;
    border-radius: 2px;
    background: linear-gradient(90deg, #f4f8fb, #e3ebf3 40%, #cfdce8);
}
.vthumb .grip {
    width: 8px;
    height: 12px;
}
.hscroll {
    height: 17px;
    flex: none;
    display: flex;
    align-items: center;
    gap: 2px;
    background: #e8f0f8;
}
.htrack {
    flex: 1;
    height: 17px;
    padding: 1px 0;
    background: #fafbfc;
}
.hthumb {
    width: 83%;
    height: 15px;
    display: flex;
    align-items: center;
    justify-content: center;
    border: 1px solid #9fb0bf;
    border-radius: 2px;
    background: linear-gradient(#f4f8fb, #e3ebf3 40%, #cfdce8);
}
.hthumb .grip {
    width: 12px;
    height: 8px;
}

/* status bar */
.statusbar {
    position: relative;
    height: 26px;
    flex: none;
    display: flex;
    align-items: center;
    justify-content: space-between;
    padding: 0 18px 0 13px;
    background: linear-gradient(#fff 60%, #f3f4f5);
}
.message {
    height: 21px;
    padding: 2px 5px 0 4px;
    border: 1px solid #c1cde0;
    border-bottom: 0;
    border-radius: 3px 3px 0 0;
    background: linear-gradient(#eef3fa, #fff);
}
.logo {
    position: absolute;
    left: 49%;
    top: 4px;
    width: 39px;
    height: 19px;
}
.logo-text {
    fill: #fff;
    font-family: "Liberation Sans", sans-serif;
    font-size: 13px;
    font-weight: bold;
}
.session {
    display: flex;
    align-items: center;
    gap: 6px;
    padding-top: 3px;
}
.play {
    width: 9px;
    height: 12px;
}
.status-sep {
    width: 1px;
    height: 15px;
    background: #d3d6da;
}
.system {
    margin-right: 3px;
}
.caret {
    display: inline-block;
    margin: 0 0 3px 8px;
    border: 4px solid transparent;
    border-top: 6px solid #24365e;
    border-bottom: 0;
}
.xfer {
    width: 16px;
    height: 14px;
    margin: 0 11px 0 6px;
}
.mode {
    margin-right: 27px;
}
.lock {
    width: 18px;
    height: 16px;
}
.watermark {
    position: absolute;
    right: 10px;
    bottom: -2px;
    color: #999;
    opacity: 0.45;
    font-family: "Liberation Serif", serif;
    font-size: 23px;
    line-height: 26px;
}
.taskbar {
    position: relative;
    height: 8px;
    flex: none;
    overflow: hidden;
    display: flex;
    background: linear-gradient(90deg, #020308, #0d0f14);
}
.task {
    background: #333335;
}
.task.wide {
    width: 18%;
    margin: 0 23% 0 48px;
}
.task.small {
    width: 48px;
}
.clock {
    position: absolute;
    right: 29px;
    top: 2px;
    color: #ddd;
}
```
